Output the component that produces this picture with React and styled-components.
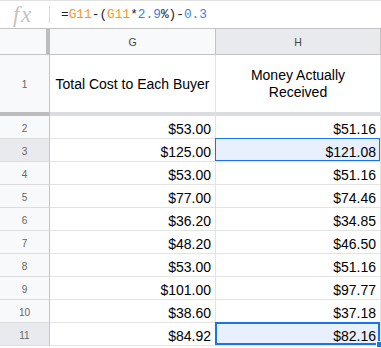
import React from "react";
import styled, { createGlobalStyle, css } from "styled-components";

const GlobalStyle = createGlobalStyle`
  html, body {
    margin: 0;
    padding: 0;
    background: #ffffff;
  }
  body {
    font-family: "Liberation Sans", Arial, sans-serif;
    overflow: hidden;
  }
`;

const rows = [
  { n: 2, g: "$53.00", h: "$51.16" },
  { n: 3, g: "$125.00", h: "$121.08", sel: "light" },
  { n: 4, g: "$53.00", h: "$51.16" },
  { n: 5, g: "$77.00", h: "$74.46" },
  { n: 6, g: "$36.20", h: "$34.85" },
  { n: 7, g: "$48.20", h: "$46.50" },
  { n: 8, g: "$53.00", h: "$51.16" },
  { n: 9, g: "$101.00", h: "$97.77" },
  { n: 10, g: "$38.60", h: "$37.18" },
  { n: 11, g: "$84.92", h: "$82.16", sel: "active" },
];

const App = () => {
  return (
    <Page>
      <GlobalStyle />
      <FormulaBar>
        <FxLabel>fx</FxLabel>
        <BarDivider />
        <Formula>
          <Tok>=</Tok>
          <Tok $c="ref">G11</Tok>
          <Tok>-(</Tok>
          <Tok $c="ref">G11</Tok>
          <Tok>*</Tok>
          <Tok $c="num">2.9</Tok>
          <Tok>%)-</Tok>
          <Tok $c="num">0.3</Tok>
        </Formula>
      </FormulaBar>

      <Sheet>
        <Corner />
        <ColHead>G</ColHead>
        <ColHead $active>H</ColHead>

        <RowHead $tall>1</RowHead>
        <TitleCell>Total Cost to Each Buyer</TitleCell>
        <TitleCell>
          Money Actually
          <br />
          Received
        </TitleCell>

        {rows.map((r) => (
          <React.Fragment key={r.n}>
            <RowHead $active={!!r.sel}>{r.n}</RowHead>
            <Cell>{r.g}</Cell>
            <Cell $sel={r.sel}>
              {r.h}
              {r.sel === "active" && <FillHandle />}
            </Cell>
          </React.Fragment>
        ))}
      </Sheet>
    </Page>
  );
};

const Page = styled.div`
  width: 381px;
  height: 348px;
  overflow: hidden;
  background: #fff;
`;

const FormulaBar = styled.div`
  height: 27px;
  border-top: 1px solid #e1e1e1;
  display: flex;
  align-items: center;
`;

const FxLabel = styled.div`
  width: 46px;
  padding-left: 13px;
  box-sizing: border-box;
  font-family: "Liberation Serif", "Times New Roman", serif;
  font-style: italic;
  font-size: 23px;
  color: #c4c4c4;
  line-height: 27px;
  letter-spacing: 1.5px;
`;

const BarDivider = styled.div`
  width: 1px;
  height: 17px;
  background: #dadce0;
  margin-left: 3px;
  margin-right: 11px;
`;

const Formula = styled.div`
  font-family: "Liberation Mono", "DejaVu Sans Mono", monospace;
  font-size: 12.8px;
  color: #222;
  white-space: pre;
  line-height: 27px;
`;

const Tok = styled.span`
  color: ${(p) =>
    p.$c === "ref" ? "#f7981d" : p.$c === "num" ? "#3d7fe6" : "#222"};
`;

const Sheet = styled.div`
  display: grid;
  grid-template-columns: 50px 166px 165px;
  grid-auto-rows: 23px;
  grid-template-rows: 26px 61px;
  border-top: 1px solid #c4c4c4;
`;

const Corner = styled.div`
  background: #f8f9fa;
  border-right: 4px solid #bdbdbd;
  border-bottom: 1px solid #c4c4c4;
`;

const ColHead = styled.div`
  background: ${(p) => (p.$active ? "#e8eaed" : "#f8f9fa")};
  border-right: 1px solid #c4c4c4;
  border-bottom: 1px solid #c4c4c4;
  display: flex;
  align-items: center;
  justify-content: center;
  font-size: 10.5px;
  color: #444;
  padding-top: 1px;
`;

const RowHead = styled.div`
  background: ${(p) => (p.$active ? "#e8eaed" : "#f8f9fa")};
  border-right: 1px solid #c4c4c4;
  border-bottom: ${(p) =>
    p.$tall ? "4px solid #bdbdbd" : "1px solid #dcdcdc"};
  display: flex;
  align-items: center;
  justify-content: center;
  font-size: 10px;
  color: #666;
  padding-top: 2px;
  box-sizing: border-box;
`;

const TitleCell = styled.div`
  border-right: 1px solid #e2e3e3;
  border-bottom: 4px solid #dadce0;
  display: flex;
  align-items: center;
  justify-content: center;
  text-align: center;
  font-size: 14px;
  line-height: 17px;
  color: #000;
  padding-top: 1px;
`;

const selectionStyles = {
  light: css`
    background: #e8f0fe;
    &::after {
      border: 1px solid #1a73e8;
    }
  `,
  active: css`
    background: #e8f0fe;
    &::after {
      border: 2px solid #1a73e8;
    }
  `,
};

const Cell = styled.div`
  position: relative;
  border-right: 1px solid #e2e3e3;
  border-bottom: 1px solid #e2e3e3;
  display: flex;
  align-items: flex-end;
  justify-content: flex-end;
  padding: 0 4px 1px 0;
  font-size: 14px;
  line-height: 16px;
  color: #000;

  &::after {
    content: "";
    position: absolute;
    top: -1px;
    left: -1px;
    right: 0;
    bottom: 0;
    pointer-events: none;
    display: ${(p) => (p.$sel ? "block" : "none")};
  }

  ${(p) => p.$sel && selectionStyles[p.$sel]}
`;

const FillHandle = styled.span`
  position: absolute;
  right: -3px;
  bottom: -3px;
  width: 5px;
  height: 5px;
  background: #1a73e8;
  border: 1px solid #ffffff;
  z-index: 2;
`;

export default App;
